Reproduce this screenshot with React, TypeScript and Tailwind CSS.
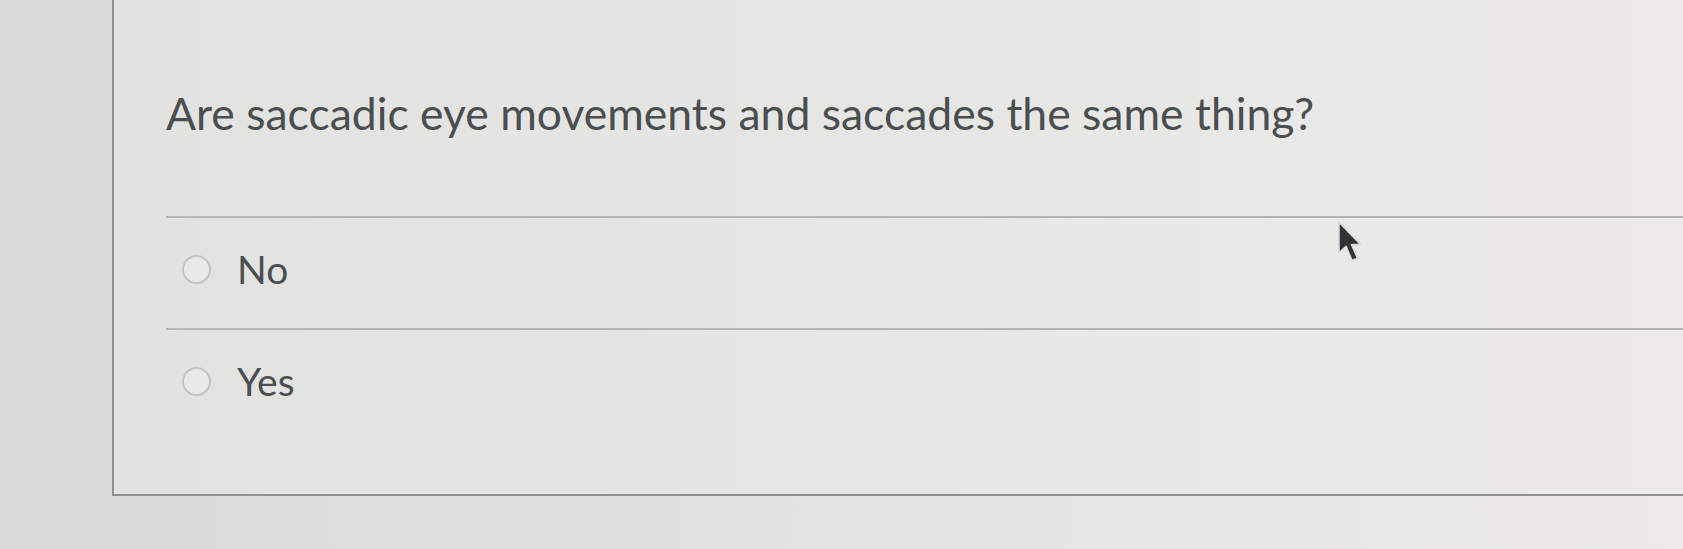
import React from "react";

const options = ["No", "Yes"];

const Radio = () => (
  <span className="block w-[29px] h-[29px] rounded-full border-2 border-[#c4c4c2] bg-[#e9e9e7]" />
);

const Cursor = () => (
  <svg width="30" height="46" viewBox="0 0 26 42" className="absolute left-[1336px] top-[220px]">
    <path
      d="M2 2 L2 30 L8.5 24 L14 37 L19 35 L13.5 22.5 L22 22.5 Z"
      fill="#2f3336"
      stroke="#d9d9d9"
      strokeWidth="1.5"
      strokeLinejoin="round"
    />
  </svg>
);

export default function App() {
  return (
    <div
      className="relative w-[1683px] h-[549px] overflow-hidden bg-gradient-to-r from-[#d9d9d7] via-[#e3e3e1] to-[#ecebe9]"
      style={{ fontFamily: "Lato, 'Open Sans', sans-serif" }}
    >
      <div className="flex h-[496px]">
        <div className="w-[112px] shrink-0" />
        <div className="flex-1 border-l-2 border-b-2 border-[#8e8f8e] bg-gradient-to-r from-[#e2e2e0] via-[#e6e6e4] to-[#ecebe9] pl-[52px]">
          <h1 className="pt-[83px] h-[216px] text-[44.5px] leading-[60px] text-[#4a4e50] font-normal">
            Are saccadic eye movements and saccades the same thing?
          </h1>
          {options.map((o) => (
            <div
              key={o}
              className="h-[112px] border-t-2 border-[#b5b5b3] flex items-center gap-[26px] pl-[16px] pb-[8px]"
            >
              <Radio />
              <span className="text-[39px] text-[#4a4e50]">{o}</span>
            </div>
          ))}
        </div>
      </div>
      <Cursor />
    </div>
  );
}
